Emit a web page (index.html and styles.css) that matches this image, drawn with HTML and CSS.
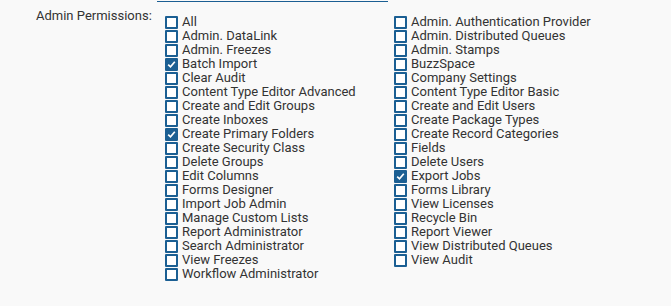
FILE: index.html
```html
<!DOCTYPE html>
<html lang="en">
  <head>
    <meta charset="UTF-8">
    <title>Admin Permissions</title>
    <link rel="stylesheet" href="styles.css">
  </head>
  <body>
    <div class="prev-field"></div>

    <div class="field">
      <div class="field-label">Admin Permissions:</div>
      <div class="perm-list">
        <ul class="col">
          <li><span class="box"></span>All</li>
          <li><span class="box"></span>Admin. DataLink</li>
          <li><span class="box"></span>Admin. Freezes</li>
          <li><span class="box checked"><svg viewBox="0 0 9 9"><polyline points="1.2,4.6 3.5,6.8 7.8,1.8"/></svg></span>Batch Import</li>
          <li><span class="box"></span>Clear Audit</li>
          <li><span class="box"></span>Content Type Editor Advanced</li>
          <li><span class="box"></span>Create and Edit Groups</li>
          <li><span class="box"></span>Create Inboxes</li>
          <li><span class="box checked"><svg viewBox="0 0 9 9"><polyline points="1.2,4.6 3.5,6.8 7.8,1.8"/></svg></span>Create Primary Folders</li>
          <li><span class="box"></span>Create Security Class</li>
          <li><span class="box"></span>Delete Groups</li>
          <li><span class="box"></span>Edit Columns</li>
          <li><span class="box"></span>Forms Designer</li>
          <li><span class="box"></span>Import Job Admin</li>
          <li><span class="box"></span>Manage Custom Lists</li>
          <li><span class="box"></span>Report Administrator</li>
          <li><span class="box"></span>Search Administrator</li>
          <li><span class="box"></span>View Freezes</li>
          <li><span class="box"></span>Workflow Administrator</li>
        </ul>
        <ul class="col">
          <li><span class="box"></span>Admin. Authentication Provider</li>
          <li><span class="box"></span>Admin. Distributed Queues</li>
          <li><span class="box"></span>Admin. Stamps</li>
          <li><span class="box"></span>BuzzSpace</li>
          <li><span class="box"></span>Company Settings</li>
          <li><span class="box"></span>Content Type Editor Basic</li>
          <li><span class="box"></span>Create and Edit Users</li>
          <li><span class="box"></span>Create Package Types</li>
          <li><span class="box"></span>Create Record Categories</li>
          <li><span class="box"></span>Fields</li>
          <li><span class="box"></span>Delete Users</li>
          <li><span class="box checked"><svg viewBox="0 0 9 9"><polyline points="1.2,4.6 3.5,6.8 7.8,1.8"/></svg></span>Export Jobs</li>
          <li><span class="box"></span>Forms Library</li>
          <li><span class="box"></span>View Licenses</li>
          <li><span class="box"></span>Recycle Bin</li>
          <li><span class="box"></span>Report Viewer</li>
          <li><span class="box"></span>View Distributed Queues</li>
          <li><span class="box"></span>View Audit</li>
        </ul>
      </div>
    </div>
  </body>
</html>
```

FILE: styles.css
```css
body {
  margin: 0;
  background: #f9f9f9;
  font-family: Roboto, "Liberation Sans", sans-serif;
  font-size: 13px;
  color: #333;
}

/* bottom edge of the input above, cut off by the screenshot */
.prev-field {
  width: 231px;
  height: 1px;
  margin-left: 157px;
  border-bottom: 1px solid #1b5f93;
}

.field {
  display: flex;
  padding-top: 7px;
}

.field-label {
  width: 129px;
  padding-left: 36px;
  line-height: 14px;
}

.perm-list {
  display: flex;
  padding-top: 6px;
}

.col {
  list-style: none;
  margin: 0;
  padding: 0;
  width: 229px;
}

.col li {
  display: flex;
  align-items: center;
  height: 14px;
  line-height: 14px;
  white-space: nowrap;
}

.box {
  box-sizing: border-box;
  flex: none;
  width: 13px;
  height: 13px;
  margin-right: 4px;
  border: 2px solid #1b5f93;
  border-radius: 1px;
  background: #fff;
}

.box.checked {
  background: #1b5f93;
}

.box svg {
  display: block;
  width: 9px;
  height: 9px;
}

.box polyline {
  fill: none;
  stroke: #fff;
  stroke-width: 1.7;
}
```
